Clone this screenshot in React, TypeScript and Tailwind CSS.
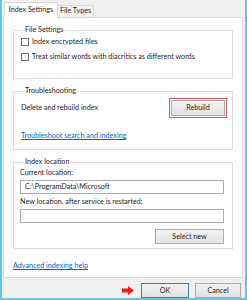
import React from "react";

function Checkbox({ label }: { label: string }) {
  return (
    <label className="flex h-[10px] items-center gap-[3px]">
      <span className="h-[8px] w-[8px] shrink-0 border border-[#707070] bg-white" />
      <span>{label}</span>
    </label>
  );
}

function Button({
  children,
  className = "",
}: {
  children: React.ReactNode;
  className?: string;
}) {
  return (
    <button
      type="button"
      className={
        "flex items-center justify-center border bg-gradient-to-b from-[#f2f2f2] to-[#e3e3e3] leading-none text-[#262626] " +
        className
      }
    >
      {children}
    </button>
  );
}

export default function App() {
  return (
    <div
      className="flex h-[300px] w-[247px] flex-col border-x-2 border-b-2 border-[#69c4e6] bg-[#f0f0f0] text-[7.2px] text-[#262626]"
      style={{ fontFamily: 'Lato, "Noto Sans", sans-serif' }}
    >
      {/* tabs */}
      <div className="flex items-end pl-[2px] pt-[2px]">
        <div className="relative z-10 -mb-px flex h-[16px] w-[54px] items-center justify-center border border-b-0 border-[#d9d9d9] bg-white">
          Index Settings
        </div>
        <div className="flex h-[12px] w-[36px] items-center justify-center border border-b-0 border-l-0 border-[#d9d9d9] bg-[#f4f4f4]">
          File Types
        </div>
      </div>

      {/* panel */}
      <div className="ml-[1px] mr-[2px] flex h-[261px] flex-col border border-[#d9d9d9] bg-white px-[9px]">
        <fieldset className="mt-[7px] h-[54px] border border-[#dcdcdc] px-[7px]">
          <legend className="ml-[2px] px-[2px] leading-[10px]">File Settings</legend>
          <div className="mt-[2px] flex flex-col gap-[5px]">
            <Checkbox label="Index encrypted files" />
            <Checkbox label="Treat similar words with diacritics as different words" />
          </div>
        </fieldset>

        <fieldset className="mt-[7px] h-[64px] border border-[#dcdcdc] pl-[7px] pr-[5px]">
          <legend className="ml-[2px] px-[2px] leading-[10px]">Troubleshooting</legend>
          <div className="mt-[2px] flex h-[20px] items-center justify-between">
            <span>Delete and rebuild index</span>
            <div className="border border-[#d4595a] p-px">
              <Button className="h-[16px] w-[54px] border-[#acacac]">Rebuild</Button>
            </div>
          </div>
          <a href="#" className="mt-[13px] block leading-[10px] text-[#0066cc] underline">
            Troubleshoot search and indexing
          </a>
        </fieldset>

        <fieldset className="mt-[7px] h-[92px] border border-[#dcdcdc] pl-[6px] pr-[8px]">
          <legend className="ml-[3px] px-[2px] leading-[10px]">Index location</legend>
          <div className="mt-[1px] leading-[10px]">Current location:</div>
          <div className="mt-[2px] flex h-[14px] items-center border border-[#abadb3] bg-white px-[4px]">
            C:\ProgramData\Microsoft
          </div>
          <div className="mt-[3px] leading-[10px]">New location, after service is restarted:</div>
          <div className="mt-[2px] h-[14px] border border-[#abadb3] bg-white" />
          <div className="mt-[6px] flex justify-end">
            <Button className="h-[15px] w-[69px] border-[#acacac]">Select new</Button>
          </div>
        </fieldset>

        <a href="#" className="mt-[12px] leading-[10px] text-[#0066cc] underline">
          Advanced indexing help
        </a>
      </div>

      {/* dialog buttons */}
      <div className="flex items-center justify-end gap-[6px] pr-[4px] pt-[5px]">
        <svg width="12" height="9" viewBox="0 0 12 9" className="mr-[1px]">
          <path d="M0 2.5h6V0l6 4.5L6 9V6.5H0z" fill="#e3211b" />
        </svg>
        <Button className="h-[15px] w-[48px] border-[#3c7fb1]">OK</Button>
        <Button className="h-[15px] w-[46px] border-[#acacac]">Cancel</Button>
      </div>
    </div>
  );
}
